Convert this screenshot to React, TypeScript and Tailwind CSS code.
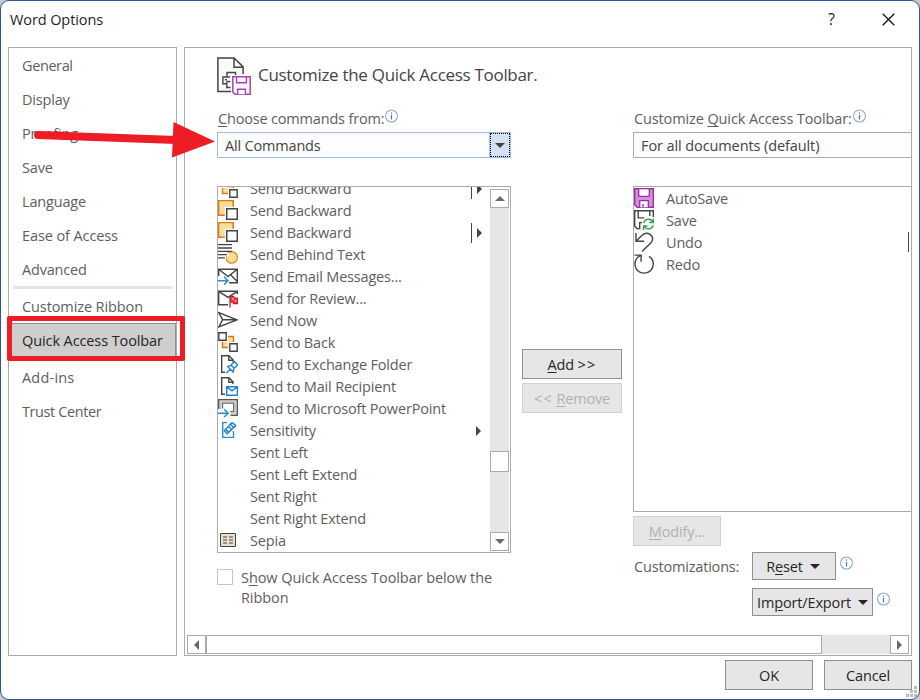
import React from 'react';

const commands = [
  { label: 'Send Backward', icon: 'toBack', split: true, arrow: true },
  { label: 'Send Backward', icon: 'backward' },
  { label: 'Send Backward', icon: 'backward', split: true, arrow: true },
  { label: 'Send Behind Text', icon: 'behindText' },
  { label: 'Send Email Messages...', icon: 'email' },
  { label: 'Send for Review...', icon: 'review' },
  { label: 'Send Now', icon: 'sendNow' },
  { label: 'Send to Back', icon: 'toBack' },
  { label: 'Send to Exchange Folder', icon: 'exchange' },
  { label: 'Send to Mail Recipient', icon: 'recipient' },
  { label: 'Send to Microsoft PowerPoint', icon: 'powerpoint' },
  { label: 'Sensitivity', icon: 'sensitivity', arrow: true },
  { label: 'Sent Left' },
  { label: 'Sent Left Extend' },
  { label: 'Sent Right' },
  { label: 'Sent Right Extend' },
  { label: 'Sepia', icon: 'sepia' }
];

const toolbarItems = [
  { label: 'AutoSave', icon: 'autosave' },
  { label: 'Save', icon: 'save' },
  { label: 'Undo', icon: 'undo', split: true },
  { label: 'Redo', icon: 'redo' }
];

const glyphs: Record<string, React.ReactNode> = {
  toBack: (
    <>
      <path d="M4.5 4.5h11v11h-11z" fill="#f9dd9c" stroke="#df7a10" strokeWidth="1.4" />
      <path d="M0 0h10v10H0zM10 10h10v10H10z" fill="#fff" />
      <path d="M.8.8h7.4v7.4H.8zM11.8 11.8h7.4v7.4h-7.4z" fill="#fafafa" stroke="#444" strokeWidth="1.4" />
    </>
  ),
  backward: (
    <>
      <path d="M.6.6h14.6v14.6H.6z" fill="#f9dd9c" stroke="#df7a10" strokeWidth="1.5" />
      <path d="M6.8 6.8H20V20H6.8z" fill="#fff" />
      <path d="M8.7 8.7h10.6v10.6H8.7z" fill="#fafafa" stroke="#444" strokeWidth="1.5" />
    </>
  ),
  behindText: (
    <>
      <circle cx="13.6" cy="13.4" r="5.8" fill="#f9dd9c" stroke="#df8a20" strokeWidth="1.2" />
      <path d="M0 10.5h11M0 13.5h8" stroke="#fff" strokeWidth="3" />
      <path d="M0 .7h14M0 4h14M0 7.3h14M0 10.6h9M0 13.9h7" stroke="#444" strokeWidth="1.3" />
    </>
  ),
  email: (
    <>
      <path d="M.7 10V3.3h18.6v13.4H11M.7 3.3l9.3 7.2 9.3-7.2M13 9.2l6 6" fill="none" stroke="#444" strokeWidth="1.4" />
      <path d="M0 14.8h9.8M6 10.8l4 4-4 4" fill="none" stroke="#2b8fd0" strokeWidth="1.5" />
    </>
  ),
  review: (
    <>
      <path d="M10 16.7H.7V3.3h18.6V6M.7 3.3l9.3 6 9.3-6" fill="none" stroke="#444" strokeWidth="1.4" />
      <path d="M12 19.5V8.5h3.7v1.6h3.8v5.4h-4v-1.4H12" fill="#ee3a43" stroke="#cf202b" strokeWidth="1.3" />
      <path d="M14 10.8h2M16.500 13h2" stroke="#fff" strokeWidth=".8" />
    </>
  ),
  sendNow: <path d="M.8 2.7L19 9.8.8 17l3.8-7.200zM4.6 9.8H18" fill="none" stroke="#444" strokeWidth="1.4" />,
  exchange: (
    <>
      <path d="M7 18.2H3.7V1.7H11l4 4V8M10.800 1.7v4.5H15" fill="none" stroke="#444" strokeWidth="1.4" />
      <path d="M8.3 19.2l4-4M9.7 12.6l5.4 5.4.8-3.4 3.7-3.8-3.2-3.2-3.7 3.9zM13.4 11.400l3.2 3.200" fill="none" stroke="#2584c6" strokeWidth="1.4" />
    </>
  ),
  recipient: (
    <>
      <path d="M7 18.2H3.7V1.7H11l4 4V8M10.800 1.7v4.5H15" fill="none" stroke="#444" strokeWidth="1.4" />
      <path d="M8.7 10.7h10.7v8.6H8.7zl5.3 4.2 5.4-4.2" fill="#f4faff" stroke="#2584c6" strokeWidth="1.4" />
    </>
  ),
  powerpoint: (
    <>
      <path d="M.8 11V1.800h18.4v15.4h-6.700" fill="none" stroke="#555" strokeWidth="1.5" />
      <path d="M2.5 11V3.4h15v12.2H12.500" fill="none" stroke="#c8c8c8" strokeWidth="1.6" />
      <path d="M4.5 10.500V5.2h11.2v8.4H12" fill="none" stroke="#666" strokeWidth="1.3" />
      <path d="M0 15.2h10M6.2 11.4l4 3.8-4 3.8" fill="none" stroke="#2b8fd0" strokeWidth="1.5" />
    </>
  ),
  sensitivity: (
    <>
      <path d="M9 2.6H4.7v14.8h10.8V11" fill="none" stroke="#2b8fd0" strokeWidth="1.4" />
      <path d="M6.3 10.7l4.2-4.4 3.1 3.1-4.4 4.3zM8 9.7l2.7 2.7M11 5.2l3-2.6M14.2 8.8l3.6-3M12.3 4.4l4 3.6M14 2.7l4 3" fill="none" stroke="#2584c6" strokeWidth="1.5" />
    </>
  ),
  sepia: (
    <>
      <path d="M2.5 3.5h15v13h-15z" fill="#ebdfcd" stroke="#444" />
      <path d="M5 7h4M11 7h4M5 10h4M11 10h4M5 13h4M11 13h4" stroke="#444" strokeWidth="1" />
    </>
  ),
  autosave: (
    <>
      <path d="M.7.7h18.6v18.6H3.2L.7 16.8z" fill="#d58fd9" stroke="#9531a3" strokeWidth="1.4" />
      <path d="M4.7.7h10.6v7.6H4.7zM5.7 19.3v-6.6h8.6v6.6M9 19v-3" fill="#fff" stroke="#9531a3" strokeWidth="1.3" />
    </>
  ),
  save: (
    <>
      <path d="M6.5 18.6H3L.7 16.2V.7h18.6V7M4.2.7v7.2h6M15.8.7V6M5.7 18.6v-6H8" fill="none" stroke="#444" strokeWidth="1.4" />
      <path d="M9.6 13c.8-2.6 2.4-3.7 4.7-3.7 2 0 3.5 1 4.3 2.7M19.3 8.5v4h-4M19.3 15.2c-.8 2.6-2.4 3.6-4.7 3.6-2 0-3.5-1-4.3-2.6M9.5 20v-4h4" fill="none" stroke="#35a04b" strokeWidth="1.4" />
    </>
  ),
  undo: <path d="M2 1v8.2h8.2M2 9.2l5.3-5.3c3-3 6-3.4 8.8-1.5 3.3 2.3 3.2 6 .7 8.5L8 19.5" fill="none" stroke="#444" strokeWidth="1.4" />,
  redo: <path d="M.5 1.1h6.6v6.6M7.1 1.3C2.8 3 .6 6.3 1 11c.5 4.8 4.5 8.3 9.3 8.1 5-.1 9-4.1 9-9 0-3.3-1.5-6.1-4.3-7.8" fill="none" stroke="#444" strokeWidth="1.4" />
};

function Glyph({ name }: { name?: string }) {
  return (
    <svg className="h-5 w-5 shrink-0" viewBox="0 0 20 20">
      {name ? glyphs[name] : null}
    </svg>
  );
}

function Info({ className = '' }: { className?: string }) {
  return (
    <svg className={`h-[15px] w-[15px] shrink-0 ${className}`} viewBox="0 0 15 15">
      <circle cx="7.5" cy="8" r="6" fill="#fff" stroke="#8fabd9" strokeWidth="1.1" />
      <path d="M7.5 4.5v1.3M7.5 7v4.5" stroke="#4c6fae" strokeWidth="1.2" />
    </svg>
  );
}

type Direction = 'up' | 'down' | 'left' | 'right';

const triangles: Record<Direction, string> = {
  up: 'M0 5h10L5 0z',
  down: 'M0 0h10L5 5z',
  left: 'M5 0v10L0 5z',
  right: 'M0 0v10l5-5z'
};

function Triangle({ dir, className = '' }: { dir: Direction; className?: string }) {
  const vertical = dir === 'up' || dir === 'down';
  return (
    <svg
      className={`shrink-0 ${vertical ? 'h-[5px] w-[10px]' : 'h-[10px] w-[5px]'} ${className}`}
      viewBox={vertical ? '0 0 10 5' : '0 0 5 10'}
    >
      <path d={triangles[dir]} fill="currentColor" />
    </svg>
  );
}

function ScrollButton({ dir }: { dir: Direction }) {
  return (
    <div className="flex h-[19px] w-[19px] shrink-0 items-center justify-center border border-[#ababab] bg-white text-[#6a6a6a]">
      <Triangle dir={dir} />
    </div>
  );
}

function Button({ children, className = '', disabled }: { children: React.ReactNode; className?: string; disabled?: boolean }) {
  return (
    <button
      disabled={disabled}
      className={`flex shrink-0 items-center justify-center whitespace-nowrap border bg-[#e6e6e6] [&>span]:pt-0.5 ${
        disabled ? 'border-[#d0d0d0] text-[#b1b1b1]' : 'border-[#8f8f8f] text-[#262626]'
      } ${className}`}
    >
      {children}
    </button>
  );
}

function Key({ children }: { children: React.ReactNode }) {
  return <span className="underline decoration-1 underline-offset-2">{children}</span>;
}

function NavItem({ label, className = '' }: { label: string; className?: string }) {
  return <div className={`flex h-[34px] shrink-0 items-center pl-[13px] ${className}`}>{label}</div>;
}

function Sidebar() {
  return (
    <nav className="relative flex w-[169px] shrink-0 flex-col border border-[#ababab] pt-px">
      <NavItem label="General" className="tracking-[-0.4px]" />
      <NavItem label="Display" />
      <NavItem label="Proofing" />
      <NavItem label="Save" />
      <NavItem label="Language" />
      <NavItem label="Ease of Access" className="tracking-[-0.1px]" />
      <NavItem label="Advanced" />
      <div className="mx-1 -mt-px h-[3px] shrink-0 bg-[#e4e4e4]" />
      <NavItem label="Customize Ribbon" className="mt-px tracking-[-0.1px]" />
      <NavItem label="Quick Access Toolbar" className="-mt-px h-[35px] border border-l-0 border-[#8f8f8f] bg-[#d0cecd] tracking-[-0.1px] text-[#262626]" />
      <NavItem label="Add-ins" className="mt-[3px] tracking-[0.2px]" />
      <NavItem label="Trust Center" className="tracking-[-0.4px]" />
      <div className="absolute -left-[2px] top-[268px] h-[45px] w-[178px] rounded-[2px] border-[5px] border-[#ee1c25]" />
    </nav>
  );
}

function CommandList() {
  return (
    <div className="flex h-[367px] justify-between overflow-hidden border border-[#ababab]">
      <div className="-mt-[9px] w-[269px]">
        {commands.map((command, i) => (
          <div key={i} className="flex h-[22px] items-start">
            <Glyph name={command.icon} />
            <span className="ml-3 flex-1 whitespace-nowrap leading-[22px]">{command.label}</span>
            {command.split && <div className="mt-px h-5 w-px bg-[#444]" />}
            <div className={`flex h-[22px] items-center text-[#444] ${command.split ? 'w-[15px] pl-[5px]' : 'w-[15px] pl-1'}`}>
              {command.arrow && <Triangle dir="right" className="h-[9px]" />}
            </div>
          </div>
        ))}
      </div>
      <div className="mb-px mr-px mt-[2px] flex w-[19px] flex-col bg-[#e6e6e6]">
        <ScrollButton dir="up" />
        <div className="mb-auto mt-[243px] h-[21px] border border-[#ababab] bg-white" />
        <ScrollButton dir="down" />
      </div>
    </div>
  );
}

function ToolbarIcon() {
  return (
    <svg className="h-[38px] w-[35px]" viewBox="0 0 35 38">
      <path d="M14 34.5H.9V.9h16.2l9 9V17H20v-4h-8v7H6v7h6v4h3" fill="#fafafa" />
      <path d="M14 34.5H.9V.9h16.2l9 9V17M17 .9v9.3h9.1" fill="none" stroke="#444" strokeWidth="1.5" />
      <path d="M10 20v-4.5h8.5V18M13 20H5.9v6.8H9M9.8 24.5v6h3.8M9.8 24.5h3.6M8 22.7h2" fill="none" stroke="#444" strokeWidth="1.4" />
      <path d="M15.8 19.8h17.4v17.4H18l-2.2-2.2z" fill="#fafafa" stroke="#ab42b5" strokeWidth="1.5" />
      <path d="M19.6 19.8h9.8v6h-9.8zM20.7 37.2v-4.9h7.7v4.9" fill="#fff" stroke="#ab42b5" strokeWidth="1.4" />
    </svg>
  );
}

function Content() {
  return (
    <main className="flex w-[728px] flex-col overflow-hidden border border-[#ababab]">
      <div className="flex h-[578px] shrink-0 flex-col pl-8 pt-[9px]">
        <div className="flex h-[38px] shrink-0 gap-[6px] text-[17px] tracking-[-0.3px] text-[#444]">
          <ToolbarIcon />
          <h1 className="leading-[36px]">Customize the Quick Access Toolbar.</h1>
        </div>

        <div className="mt-3 flex">
          <section className="w-[294px] shrink-0">
            <div className="flex h-[25px] pl-px">
              <span className="leading-6"><Key>C</Key>hoose commands from:</span>
              <Info className="mt-px" />
            </div>
            <div className="flex h-[26px] border border-[#9fbbe0] bg-[#fdfdfd] text-[#444]">
              <span className="flex-1 pl-[7px] leading-[25px]">All Commands</span>
              <div className="flex w-[21px] border-l border-[#9fbbe0]">
                <div className="flex flex-1 items-center justify-center border border-dotted border-black bg-[#d5e1f2]">
                  <Triangle dir="down" />
                </div>
              </div>
            </div>
            <div className="mt-7">
              <CommandList />
            </div>
            <div className="mt-[15px] flex gap-2">
              <div className="mt-px h-4 w-4 shrink-0 border border-[#c6c6c6] bg-white" />
              <label className="whitespace-nowrap leading-5 tracking-[-0.08px]">
                S<Key>h</Key>ow Quick Access Toolbar below the<br />Ribbon
              </label>
            </div>
          </section>

          <section className="mx-[11px] mt-[242px] flex w-[100px] shrink-0 flex-col gap-1">
            <Button className="h-[30px]"><span><Key>A</Key>dd <span className="tracking-[1.2px]">&gt;&gt;</span></span></Button>
            <Button className="h-[30px]" disabled><span><span className="tracking-[1.2px]">&lt;&lt;</span> <Key>R</Key>emove</span></Button>
          </section>

          <section className="w-[300px] shrink-0">
            <div className="flex h-[25px] pl-px">
              <span className="leading-6 tracking-[-0.12px]">Customize <Key>Q</Key>uick Access Toolbar:</span>
              <Info className="mt-px" />
            </div>
            <div className="h-[26px] border border-[#ababab] bg-[#fdfdfd] pl-[7px] leading-[25px] tracking-[-0.1px] text-[#444]">
              For all documents (default)
            </div>
            <div className="mt-7 h-[326px] border border-[#ababab] pt-px">
              {toolbarItems.map((item) => (
                <div key={item.label} className="flex h-[22px] items-start">
                  <Glyph name={item.icon} />
                  <span className="ml-3 w-[242px] leading-[22px]">{item.label}</span>
                  {item.split && <div className="h-5 w-px shrink-0 bg-[#444]" />}
                </div>
              ))}
            </div>
            <Button className="mt-1 h-[30px] w-[88px]" disabled><span><Key>M</Key>odify...</span></Button>
            <div className="mt-[6px] flex h-7">
              <span className="w-[119px] pl-px leading-[29px]">Customizations:</span>
              <Button className="h-7 w-[84px] gap-[7px] pr-0.5">
                <span>R<Key>e</Key>set</span>
                <Triangle dir="down" />
              </Button>
              <Info className="ml-[3px] mt-[3px]" />
            </div>
            <div className="ml-[119px] mt-2 flex h-7">
              <Button className="h-7 w-[121px] gap-[7px]">
                <span className="tracking-[-0.15px]">Im<Key>p</Key>ort/Export</span>
                <Triangle dir="down" />
              </Button>
              <Info className="ml-[3px] mt-[3px]" />
            </div>
          </section>
        </div>
      </div>

      <div className="ml-[2px] mt-[9px] flex h-[19px] w-[722px] shrink-0 bg-[#e6e6e6]">
        <ScrollButton dir="left" />
        <div className="mr-auto w-[616px] border border-[#ababab] bg-white" />
        <ScrollButton dir="right" />
      </div>
    </main>
  );
}

export default function App() {
  return (
    <div className="h-[700px] w-[920px] overflow-hidden bg-[#c8c8c8] font-['Open_Sans','Noto_Sans',sans-serif] text-[14.5px] tracking-[-0.18px] text-[#5e5e5e]">
      <div className="relative flex h-full flex-col rounded-[9px] border border-[#2b579a] bg-white">
        <header className="flex h-[46px] shrink-0 items-start pl-[9px] text-[#1f1f1f]">
          <span className="flex-1 leading-[37px] tracking-[-0.1px]">Word Options</span>
          <span className="w-[54px] text-[16px] leading-[36px]">?</span>
          <svg className="mr-[24px] mt-3 h-[13px] w-[13px]" viewBox="0 0 13 13">
            <path d="M.7.7l11.6 11.6M12.3.7L.7 12.3" stroke="#111" strokeWidth="1.3" />
          </svg>
        </header>

        <div className="flex h-[609px] shrink-0 gap-[7px] pl-[7px]">
          <Sidebar />
          <Content />
        </div>

        <footer className="mt-1 flex justify-end gap-[11px] pr-[7px]">
          <Button className="h-[30px] w-[88px]"><span>OK</span></Button>
          <Button className="h-[30px] w-[88px]"><span>Cancel</span></Button>
        </footer>

        {/* resize grip */}
        <svg className="absolute bottom-[2px] right-[2px] h-[11px] w-[11px]" viewBox="0 0 11 11">
          <path d="M8 0h3v3H8zM4 4h3v3H4zM8 4h3v3H8zM0 8h3v3H0zM4 8h3v3H4zM8 8h3v3H8z" fill="#bcbcbc" />
        </svg>

        {/* callout arrow */}
        <svg className="pointer-events-none absolute left-[33px] top-[120px] h-[38px] w-[184px]" viewBox="34 121 184 38">
          <path d="M38 135l138 5" stroke="#ee1c25" strokeWidth="8" strokeLinecap="round" />
          <path d="M173.500 122L215 141.500 172 157.500z" fill="#ee1c25" />
        </svg>
      </div>
    </div>
  );
}
